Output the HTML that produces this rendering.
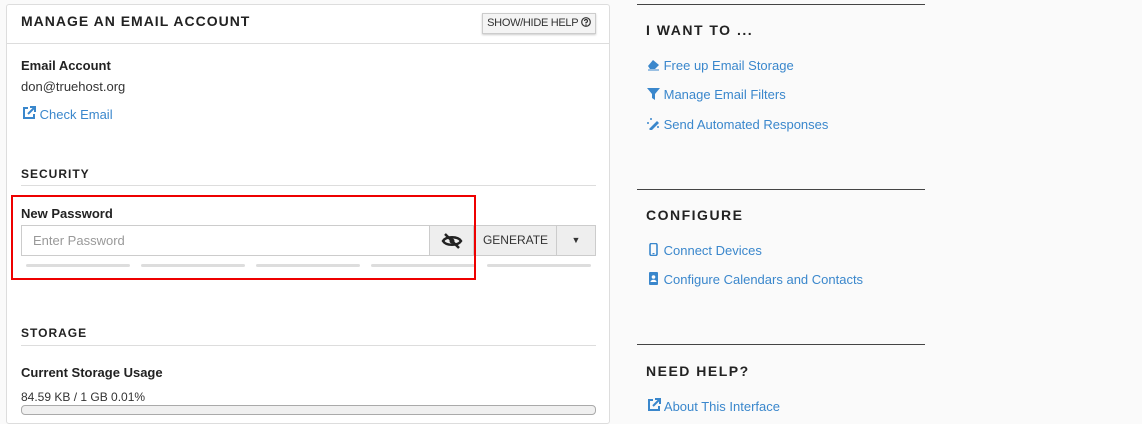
<!DOCTYPE html>
<html><head><meta charset="utf-8"><style>
*{box-sizing:border-box;margin:0;padding:0}
body{width:1142px;height:415px;background:#fafafa;font-family:"Liberation Sans",sans-serif;color:#333;font-size:13px;position:relative;overflow:hidden}
.a{position:absolute;white-space:nowrap}
.panel{position:absolute;left:6px;top:4px;width:604px;height:420px;background:#fff;border:1px solid #ddd;border-radius:3px}
.h{font-size:14px;letter-spacing:1px;color:#222;font-weight:bold}
.b{font-weight:bold;color:#222}
.link{color:#3a87cc}
.hr{position:absolute;height:1px;background:#ddd}
.rhr{position:absolute;left:637px;width:288px;height:1px;background:#444}
.rh{font-size:14px;letter-spacing:1.5px;font-weight:bold;color:#222}
.bar{position:absolute;top:264px;height:3px;width:104px;background:#ddd;border-radius:2px}
svg{vertical-align:-1px}
</style></head><body>
<div class="panel"></div>
<div class="a h" style="left:21px;top:13px">MANAGE AN EMAIL ACCOUNT</div>
<div class="a" style="left:482px;top:13px;width:114px;height:21px;border:1px solid #ccc;background:#f4f4f4;box-shadow:0 1px 2px rgba(0,0,0,.2);font-size:11px;line-height:19px;text-align:center;color:#333;letter-spacing:-0.3px">SHOW/HIDE HELP <svg width="10" height="10" viewBox="0 0 10 10"><circle cx="5" cy="5" r="4.3" fill="none" stroke="#333" stroke-width="1.2"/><path d="M3.5 4a1.5 1.5 0 1 1 1.5 1.5v1" fill="none" stroke="#333" stroke-width="1.2"/><circle cx="5" cy="8" r=".7" fill="#333"/></svg></div>
<div class="hr" style="left:7px;top:43px;width:602px"></div>
<div class="a b" style="left:21px;top:58px">Email Account</div>
<div class="a" style="left:21px;top:79px">don@truehost.org</div>
<div class="a link" style="left:22px;top:106px"><svg width="14" height="14" viewBox="0 0 14 14"><path d="M6 2H2v10h10V8" fill="none" stroke="#3a87cc" stroke-width="2"/><path d="M8 1h5v5M13 1L6 8" fill="none" stroke="#3a87cc" stroke-width="2"/></svg> Check Email</div>
<div class="a h" style="left:21px;top:167px;font-size:12px">SECURITY</div>
<div class="hr" style="left:21px;top:185px;width:575px"></div>
<div class="a b" style="left:21px;top:206px">New Password</div>
<div class="a" style="left:21px;top:225px;width:409px;height:31px;border:1px solid #ccc;background:#fff;color:#999;padding:7px 11px">Enter Password</div>
<div class="a" style="left:429px;top:225px;width:45px;height:31px;border:1px solid #ccc;background:#eee;text-align:center;padding-top:6px"><svg width="22" height="18" viewBox="0 0 22 18"><path d="M2 9c3-5 15-5 18 0c-3 5-15 5-18 0z" fill="none" stroke="#222" stroke-width="2.5"/><circle cx="11" cy="9" r="2.5" fill="#222"/><path d="M4 2l14 14" stroke="#222" stroke-width="2.5"/></svg></div>
<div class="a" style="left:474px;top:225px;width:83px;height:31px;border:1px solid #ccc;background:#eee;text-align:center;line-height:29px;font-size:12px">GENERATE</div>
<div class="a" style="left:556px;top:225px;width:40px;height:31px;border:1px solid #ccc;background:#eee;text-align:center;line-height:29px;font-size:9px">&#9660;</div>
<div class="bar" style="left:26px"></div><div class="bar" style="left:141px"></div><div class="bar" style="left:256px"></div><div class="bar" style="left:371px"></div><div class="bar" style="left:487px"></div>
<div class="a" style="left:11px;top:195px;width:465px;height:85px;border:2px solid #e00"></div>
<div class="a h" style="left:21px;top:326px;font-size:12px">STORAGE</div>
<div class="hr" style="left:21px;top:345px;width:575px"></div>
<div class="a b" style="left:21px;top:365px">Current Storage Usage</div>
<div class="a" style="left:21px;top:390px;font-size:12px">84.59 KB / 1 GB 0.01%</div>
<div class="a" style="left:21px;top:405px;width:575px;height:10px;border:1px solid #aaa;border-radius:4px;background:#f0f0f0"></div>

<div class="rhr" style="top:4px"></div>
<div class="a rh" style="left:646px;top:22px">I WANT TO ...</div>
<div class="a link" style="left:647px;top:58px"><svg width="13" height="12" viewBox="0 0 13 12"><path d="M1 7l5-6 6 5-4 4H3z" fill="#3a87cc"/><path d="M1 11h11" stroke="#3a87cc"/></svg> Free up Email Storage</div>
<div class="a link" style="left:647px;top:87px"><svg width="13" height="13" viewBox="0 0 13 13"><path d="M0 1h13L8 7v6L5 11V7z" fill="#3a87cc"/></svg> Manage Email Filters</div>
<div class="a link" style="left:647px;top:117px"><svg width="13" height="13" viewBox="0 0 13 13"><path d="M2 12l8-8 2 2-8 8z" fill="#3a87cc"/><circle cx="4" cy="2" r="1" fill="#3a87cc"/><circle cx="11" cy="10" r="1" fill="#3a87cc"/><circle cx="1" cy="6" r="1" fill="#3a87cc"/></svg> Send Automated Responses</div>
<div class="rhr" style="top:189px"></div>
<div class="a rh" style="left:646px;top:207px">CONFIGURE</div>
<div class="a link" style="left:647px;top:243px"><svg width="13" height="13" viewBox="0 0 13 13"><rect x="3" y="0.5" width="7" height="12" rx="1.5" fill="none" stroke="#3a87cc" stroke-width="1.6"/><rect x="5.5" y="10" width="2" height="1.2" fill="#3a87cc"/></svg> Connect Devices</div>
<div class="a link" style="left:647px;top:272px"><svg width="13" height="13" viewBox="0 0 13 13"><rect x="2" y="0" width="9" height="13" rx="1" fill="#3a87cc"/><circle cx="6.5" cy="5" r="1.8" fill="#fff"/><path d="M3.5 10c0-3 6-3 6 0z" fill="#fff"/></svg> Configure Calendars and Contacts</div>
<div class="rhr" style="top:344px"></div>
<div class="a rh" style="left:646px;top:363px">NEED HELP?</div>
<div class="a link" style="left:647px;top:398px"><svg width="14" height="14" viewBox="0 0 14 14"><path d="M6 2H2v10h10V8" fill="none" stroke="#3a87cc" stroke-width="2"/><path d="M8 1h5v5M13 1L6 8" fill="none" stroke="#3a87cc" stroke-width="2"/></svg> About This Interface</div>
</body></html>
